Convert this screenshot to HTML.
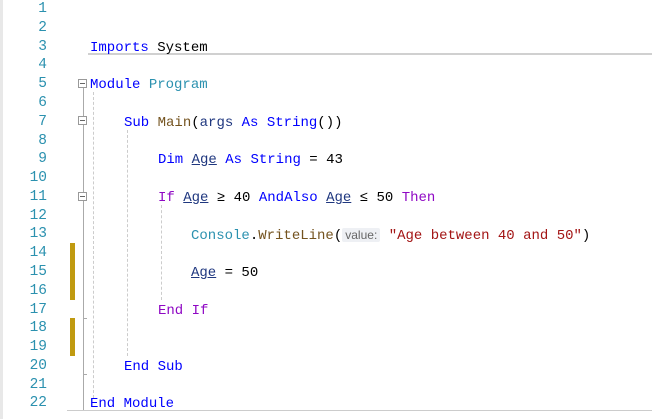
<!DOCTYPE html><html><head><style>
body{margin:0;width:652px;height:419px;background:#fff;position:relative;overflow:hidden;font-family:"Liberation Mono","DejaVu Sans Mono",monospace;font-size:14px}
.ln{position:absolute;left:0;width:47px;text-align:right;color:#2b91af;line-height:18px;margin-top:1px;font-size:14.5px}
.c{position:absolute;white-space:pre;line-height:18px;color:#000;margin-top:2px}
.k{color:#0000ff}.t{color:#2b91af}.m{color:#74531f}.p{color:#8f08c4}.s{color:#a31515}
.u{text-decoration:underline;text-decoration-color:#1f377f}
.v{color:#1f377f}
.fb{position:absolute;left:78px;width:9px;height:9px;border:1px solid #999;background:#fff;box-sizing:border-box}
.fb:after{content:"";position:absolute;left:1px;right:1px;top:3px;height:1px;background:#666}
.g{position:absolute;width:0;border-left:1px dashed #ccc}
.hint{font-size:12px;color:#666;background:#eef0f4;border-radius:2px;padding:0 3px;font-family:"Liberation Sans",sans-serif}
</style></head><body>
<div style="position:absolute;left:0;top:0;width:3px;height:419px;background:#e8e8e8"></div>
<div class="ln" style="top:-1px">1</div>
<div class="ln" style="top:18px">2</div>
<div class="ln" style="top:37px">3</div>
<div class="ln" style="top:55px">4</div>
<div class="ln" style="top:74px">5</div>
<div class="ln" style="top:93px">6</div>
<div class="ln" style="top:112px">7</div>
<div class="ln" style="top:131px">8</div>
<div class="ln" style="top:149px">9</div>
<div class="ln" style="top:168px">10</div>
<div class="ln" style="top:187px">11</div>
<div class="ln" style="top:206px">12</div>
<div class="ln" style="top:224px">13</div>
<div class="ln" style="top:243px">14</div>
<div class="ln" style="top:262px">15</div>
<div class="ln" style="top:281px">16</div>
<div class="ln" style="top:300px">17</div>
<div class="ln" style="top:318px">18</div>
<div class="ln" style="top:337px">19</div>
<div class="ln" style="top:356px">20</div>
<div class="ln" style="top:375px">21</div>
<div class="ln" style="top:393px">22</div>
<div style="position:absolute;left:70px;top:243px;width:5px;height:57px;background:#c09a10"></div>
<div style="position:absolute;left:70px;top:318px;width:5px;height:38px;background:#c09a10"></div>
<div style="position:absolute;left:88px;top:53px;width:564px;height:2px;background:#d0d0d0"></div>
<div style="position:absolute;left:83px;top:88px;width:1px;height:322px;background:#aaa"></div>
<div style="position:absolute;left:83px;top:318px;width:4px;height:1px;background:#aaa"></div>
<div style="position:absolute;left:83px;top:374px;width:4px;height:1px;background:#aaa"></div>
<div style="position:absolute;left:67px;top:410px;width:585px;height:1px;background:#ccc"></div>
<div class="g" style="left:93px;top:92px;height:306px"></div>
<div class="g" style="left:127px;top:130px;height:226px"></div>
<div class="g" style="left:161px;top:205px;height:95px"></div>
<div class="fb" style="top:79px"></div>
<div class="fb" style="top:116px"></div>
<div class="fb" style="top:192px"></div>
<div class="c" style="left:90px;top:37px"><span class="k">Imports</span> System</div>
<div class="c" style="left:90px;top:74px"><span class="k">Module</span> <span class="t">Program</span></div>
<div class="c" style="left:124px;top:112px"><span class="k">Sub</span> <span class="m">Main</span>(<span class="v">args</span> <span class="k">As</span> <span class="k">String</span>())</div>
<div class="c" style="left:158px;top:149px"><span class="k">Dim</span> <span class="v u">Age</span> <span class="k">As</span> <span class="k">String</span> = 43</div>
<div class="c" style="left:158px;top:187px"><span class="p">If</span> <span class="v u">Age</span> ≥ 40 <span class="k">AndAlso</span> <span class="v u">Age</span> ≤ 50 <span class="p">Then</span></div>
<div class="c" style="left:191px;top:224px"><span class="t">Console</span>.<span class="m">WriteLine</span>(<span class="hint">value:</span> <span class="s">"Age between 40 and 50"</span>)</div>
<div class="c" style="left:191px;top:262px"><span class="v u">Age</span> = 50</div>
<div class="c" style="left:158px;top:300px"><span class="p">End</span> <span class="p">If</span></div>
<div class="c" style="left:124px;top:356px"><span class="k">End</span> <span class="k">Sub</span></div>
<div class="c" style="left:90px;top:393px"><span class="k">End</span> <span class="k">Module</span></div>
</body></html>
